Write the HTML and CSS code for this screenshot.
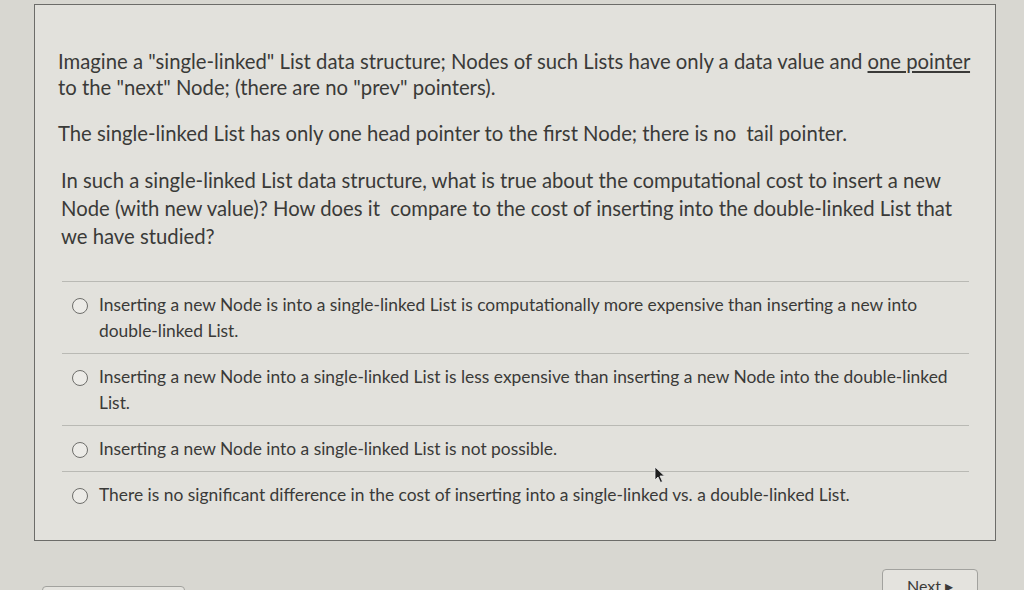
FILE: index.html
```html
<!DOCTYPE html>
<html>
<head>
<meta charset="utf-8">
<link rel="stylesheet" href="styles.css">
</head>
<body>
<div class="page">
  <div class="card">
    <div class="question">
      <p class="p1">Imagine a "single-linked" List data structure; Nodes of such Lists have only a data value and <u>one pointer</u> to the "next" Node; (there are no "prev" pointers).</p>
      <p class="p2">The single-linked List has only one head pointer to the first Node; there is no&nbsp; tail pointer.</p>
      <p class="p3">In such a single-linked List data structure, what is true about the computational cost to insert a new Node (with new value)? How does it&nbsp; compare to the cost of inserting into the double-linked List that we have studied?</p>
    </div>
    <div class="options">
      <label class="option"><span class="radio"></span><span class="otext">Inserting a new Node is into a single-linked List is computationally more expensive than inserting a new into double-linked List.</span></label>
      <label class="option"><span class="radio"></span><span class="otext">Inserting a new Node into a single-linked List is less expensive than inserting a new Node into the double-linked List.</span></label>
      <label class="option"><span class="radio"></span><span class="otext">Inserting a new Node into a single-linked List is not possible.</span></label>
      <label class="option last"><span class="radio"></span><span class="otext">There is no significant difference in the cost of inserting into a single-linked vs. a double-linked List.</span></label>
    </div>
  </div>
  <div class="footer">
    <button class="btn prev"></button>
    <button class="btn next">Next &#9656;</button>
  </div>
  <svg class="cursor" width="12" height="18" viewBox="0 0 12 18"><path d="M1 1 L1 14 L4 11 L6.5 16.5 L8.5 15.5 L6 10 L10.5 10 Z" fill="#1e1e1e" stroke="#eee" stroke-width="0.8"/></svg>
</div>
</body>
</html>
```

FILE: styles.css
```css
html, body {
  margin: 0;
  padding: 0;
}
body {
  background: #d8d7d1;
  font-family: Lato, "Open Sans", sans-serif;
  color: #3a3a38;
  width: 1024px;
  height: 590px;
  overflow: hidden;
}
.page {
  position: relative;
  padding: 4px 28px 0 34px;
}
.card {
  background: #e2e1dc;
  border: 1px solid #6c6c69;
  height: 537px;
  box-sizing: border-box;
  padding: 43px 18px 0 23px;
}
.question p {
  margin: 0;
  font-size: 20.3px;
  line-height: 26px;
}
.question .p2 {
  margin-top: 20px;
}
.question .p3 {
  margin-top: 20px;
  line-height: 28px;
  padding-left: 3px;
  padding-right: 4px;
}
.options {
  margin: 31px 8px 0 4px;
  border-top: 1px solid #b9b9b4;
}
.option {
  display: flex;
  align-items: flex-start;
  gap: 11px;
  padding: 10px 12px 9px 10px;
  border-bottom: 1px solid #b9b9b4;
  font-size: 17.4px;
  line-height: 26px;
}
.option.last {
  border-bottom: none;
}
.radio {
  flex: none;
  width: 16px;
  height: 16px;
  box-sizing: border-box;
  border: 1.5px solid #6e6e6b;
  border-radius: 50%;
  background: #ecebe7;
  margin-top: 6px;
}
.footer {
  display: flex;
  justify-content: space-between;
  align-items: flex-start;
  padding: 28px 18px 0 8px;
}
.btn {
  font-family: Lato, sans-serif;
  font-size: 16px;
  color: #3a3a38;
  background: #e4e3de;
  border: 1px solid #a2a29e;
  border-radius: 4px;
  height: 30px;
}
.btn.prev {
  width: 143px;
  margin-top: 17px;
}
.btn.next {
  width: 96px;
  padding-top: 4px;
}
.cursor {
  position: absolute;
  left: 654px;
  top: 466px;
}
```
